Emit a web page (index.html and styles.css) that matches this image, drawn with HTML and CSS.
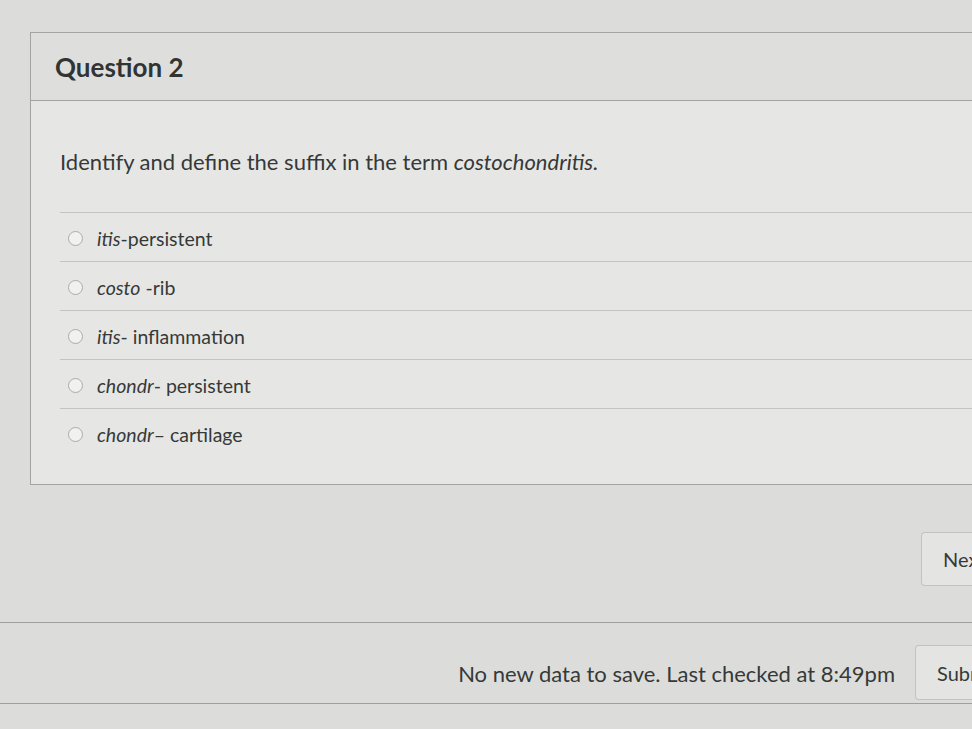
FILE: index.html
```html
<!DOCTYPE html>
<html lang="en">
<head>
    <meta charset="UTF-8">
    <meta name="viewport" content="width=device-width, initial-scale=1.0">
    <title>Quiz - Question 2</title>
    <link rel="stylesheet" href="styles.css">
</head>
<body>
    <div class="page">
        <div class="question">
            <div class="question-header">
                <h2>Question 2</h2>
            </div>
            <div class="question-body">
                <p class="question-text">Identify and define the suffix in the term <em>costochondritis.</em></p>
                <ul class="answers">
                    <li><span class="radio"></span><span><em>itis</em>-persistent</span></li>
                    <li><span class="radio"></span><span><em>costo</em> -rib</span></li>
                    <li><span class="radio"></span><span><em>itis</em>- inflammation</span></li>
                    <li><span class="radio"></span><span><em>chondr</em>- persistent</span></li>
                    <li><span class="radio"></span><span><em>chondr</em>&ndash; cartilage</span></li>
                </ul>
            </div>
        </div>

        <div class="nav-row">
            <button class="btn">Next &#9656;</button>
        </div>

        <div class="submit-row">
            <span class="status">No new data to save. Last checked at 8:49pm</span>
            <button class="btn">Submit Quiz</button>
        </div>
    </div>
</body>
</html>
```

FILE: styles.css
```css
html, body {
    margin: 0;
    padding: 0;
    overflow: hidden;
}
body {
    font-family: Lato, "Open Sans", sans-serif;
    color: #363938;
    background-color: #dcdddb;
    height: 729px;
}
.page {
    width: 1031px;
    padding-top: 32px;
}

/* question card */
.question {
    margin-left: 30px;
    border: 1px solid #a2a4a3;
    border-right: none;
    background-color: #e6e7e5;
}
.question-header {
    height: 67px;
    display: flex;
    align-items: center;
    padding-left: 24px;
    background-color: #dedfdd;
    border-bottom: 1px solid #a2a4a3;
}
.question-header h2 {
    margin: 0;
    font-size: 26px;
    font-weight: 700;
    color: #313433;
}
.question-body {
    padding: 46px 0 26px 29px;
}
.question-text {
    margin: 0 0 35px;
    font-size: 22px;
    line-height: 30px;
}
.answers {
    list-style: none;
    margin: 0;
    padding: 0;
    border-top: 1px solid #c2c4c3;
}
.answers li {
    height: 49px;
    display: flex;
    align-items: center;
    gap: 14px;
    padding: 2px 0 0 8px;
    box-sizing: border-box;
    font-size: 19.5px;
    border-bottom: 1px solid #c2c4c3;
}
.answers li:last-child {
    border-bottom: none;
}
.radio {
    width: 13px;
    height: 13px;
    border: 1px solid #a9abaa;
    border-radius: 50%;
    background-color: #f1f2f0;
}

/* buttons */
.btn {
    width: 110px;
    height: 54px;
    padding: 0 0 0 21px;
    text-align: left;
    font-family: inherit;
    font-size: 20px;
    color: #363938;
    background-color: #e4e5e3;
    border: 1px solid #c1c3c2;
    border-right: none;
    border-radius: 4px 0 0 4px;
    white-space: nowrap;
    overflow: hidden;
}
.nav-row {
    display: flex;
    justify-content: flex-end;
    margin-top: 47px;
}
.submit-row {
    display: flex;
    justify-content: flex-end;
    align-items: center;
    gap: 20px;
    margin-top: 36px;
    padding: 22px 0 3px;
    border-top: 1px solid #9ea09f;
    border-bottom: 1px solid #9ea09f;
}
.submit-row .btn {
    width: 116px;
    height: 55px;
}
.status {
    font-size: 22px;
    padding-top: 2px;
}
```
